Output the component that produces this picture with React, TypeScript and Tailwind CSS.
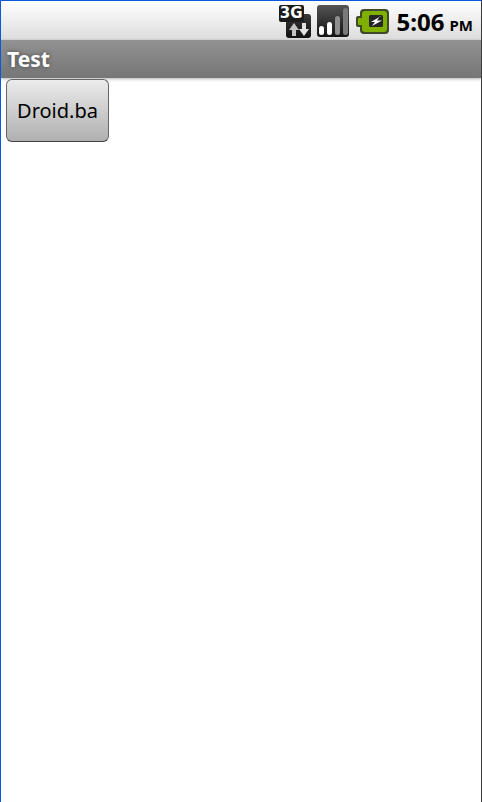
const droid = "font-['Noto_Sans','Open_Sans',sans-serif]";

function NetworkIcon() {
  return (
    <div className="relative mt-[3px] h-[34px] w-[32px]">
      <div className="absolute left-[7px] top-[10px] h-[24px] w-[25px] rounded-[3px] bg-gradient-to-b from-[#3a3a3a] to-[#111111]" />
      <div className="absolute left-[0px] top-[1px] flex h-[17px] w-[25px] items-center justify-center rounded-[2px] bg-[#1c1c1c]">
        <span className="font-['DejaVu_Sans',sans-serif] text-[15px] font-bold leading-none tracking-[0px] text-white">
          3G
        </span>
      </div>
      <svg className="absolute left-[9px] top-[18px]" width="22" height="15" viewBox="0 0 22 15">
        <path d="M6 1 L11 8 H8 V14 H4 V8 H1 Z" fill="#c4c4c4" />
        <path d="M16 14 L21 7 H18 V1 H14 V7 H11 Z" fill="#e2e2e2" />
      </svg>
    </div>
  );
}

function SignalIcon() {
  return (
    <div className="ml-[6px] mt-[4px] flex h-[32px] w-[32px] items-end gap-[3px] rounded-[3px] bg-gradient-to-b from-[#555555] to-[#141414] pb-[2px] pl-[2px]">
      <div className="h-[9px] w-[5px] rounded-[3px] bg-white" />
      <div className="h-[13px] w-[5px] rounded-[3px] bg-white" />
      <div className="h-[19px] w-[5px] rounded-[3px] bg-[#8e8e8e]" />
      <div className="h-[27px] w-[5px] rounded-[3px] bg-[#7a7a7a]" />
    </div>
  );
}

function BatteryIcon() {
  return (
    <svg className="ml-[7px] mt-[8px]" width="33" height="25" viewBox="0 0 33 25">
      <path d="M0 9 Q0 7 2 7 H4 V4 Q4 0 8 0 H29 Q33 0 33 4 V21 Q33 25 29 25 H8 Q4 25 4 21 V18 H2 Q0 18 0 16 Z" fill="#3f4a28" />
      <path d="M2 10 Q2 9 3 9 H6 V5 Q6 2 9 2 H28 Q31 2 31 5 V20 Q31 23 28 23 H9 Q6 23 6 20 V16 H3 Q2 16 2 15 Z" fill="#7fb000" />
      <rect x="13" y="6" width="14" height="12" rx="1.5" fill="#262626" />
      <path d="M25 7 L15 13 H19 L16 17 L26 11.5 H21 L24 7 Z" fill="#ffffff" />
    </svg>
  );
}

function StatusBar() {
  return (
    <div className="flex h-[39px] items-start justify-end bg-gradient-to-b from-white to-[#dcdcdc] pr-[8px]">
      <NetworkIcon />
      <SignalIcon />
      <BatteryIcon />
      <div className={`ml-[8px] mt-[9px] flex items-baseline font-bold leading-none text-black ${droid}`}>
        <span className="text-[24px]">5:06</span>
        <span className="ml-[5px] text-[15px]">PM</span>
      </div>
    </div>
  );
}

export default function App() {
  return (
    <div className="flex h-[802px] w-[482px] flex-col overflow-hidden border-t-[1px] border-r-[1px] border-l-[1px] border-t-[#0a58e0] border-r-[#3c3c3c] border-l-[#0a58e0] bg-white">
      <StatusBar />
      <div className="flex h-[38px] items-center bg-gradient-to-b from-[#929292] to-[#767676] pl-[6px] shadow-[0_1px_3px_rgba(0,0,0,0.3)]">
        <span className={`text-[21px] font-bold leading-none text-white [text-shadow:0_0_4px_#444444] ${droid}`}>
          Test
        </span>
      </div>
      <div className="pl-[5px] pt-[1px]">
        <button className={`flex h-[63px] w-[103px] items-center justify-center rounded-[6px] border border-[#666666] border-b-[#444444] bg-gradient-to-b from-[#ececec] to-[#b0b0b0] text-[20px] leading-none text-black ${droid}`}>
          Droid.ba
        </button>
      </div>
    </div>
  );
}
